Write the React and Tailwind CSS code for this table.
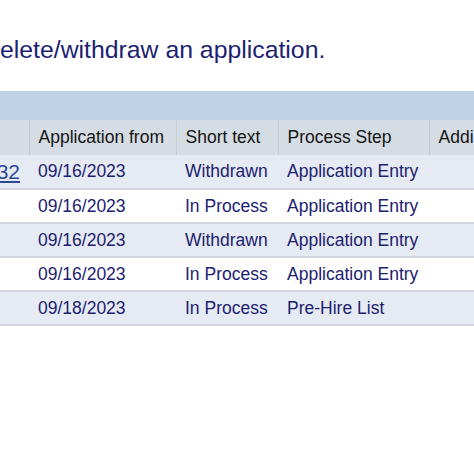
const ROWS = [
  { id: '32', date: '09/16/2023', status: 'Withdrawn', step: 'Application Entry' },
  { id: '', date: '09/16/2023', status: 'In Process', step: 'Application Entry' },
  { id: '', date: '09/16/2023', status: 'Withdrawn', step: 'Application Entry' },
  { id: '', date: '09/16/2023', status: 'In Process', step: 'Application Entry' },
  { id: '', date: '09/18/2023', status: 'In Process', step: 'Pre-Hire List' },
]

export default function App() {
  return (
    <div className="w-[474px] h-[467px] overflow-hidden bg-white font-['Liberation_Sans',Arial,sans-serif]">
      <p className="pt-[36px] h-[91px] text-[24.8px] leading-[28px] text-[#1c1f72] whitespace-nowrap">
        elete/withdraw an application.
      </p>

      {/* title bar of the table */}
      <div className="h-[29px] bg-[#bfd3e8]" />

      <table className="border-collapse text-[17.5px] whitespace-nowrap table-fixed w-[480px]">
        <colgroup>
          <col className="w-[29px]" />
          <col className="w-[147px]" />
          <col className="w-[102px]" />
          <col className="w-[151px]" />
          <col className="w-[51px]" />
        </colgroup>
        <thead>
          <tr className="h-[35px] bg-[#d6dce3] text-[#141414]">
            <th className="font-normal text-left border-r border-[#c6ccd4]" />
            <th className="font-normal text-left pl-[9px] border-r border-[#c6ccd4]">Application from</th>
            <th className="font-normal text-left pl-[9px] border-r border-[#c6ccd4]">Short text</th>
            <th className="font-normal text-left pl-[9px] border-r border-[#c6ccd4]">Process Step</th>
            <th className="font-normal text-left pl-[9px]">Addi</th>
          </tr>
        </thead>
        <tbody>
          {ROWS.map((r, i) => (
            <tr
              key={i}
              className={`h-[34px] border-b-2 border-[#d3d7dd] text-[#1c2270] ${i % 2 === 0 ? 'bg-[#e6eaf2]' : 'bg-white'}`}
            >
              <td>
                {r.id && (
                  <div className="flex justify-end pr-[9px]">
                    <span className="text-[21px] text-[#2c4a94] underline underline-offset-2">{r.id}</span>
                  </div>
                )}
              </td>
              <td className="pl-[9px]">{r.date}</td>
              <td className="pl-[9px]">{r.status}</td>
              <td className="pl-[9px]">{r.step}</td>
              <td />
            </tr>
          ))}
        </tbody>
      </table>
    </div>
  )
}
